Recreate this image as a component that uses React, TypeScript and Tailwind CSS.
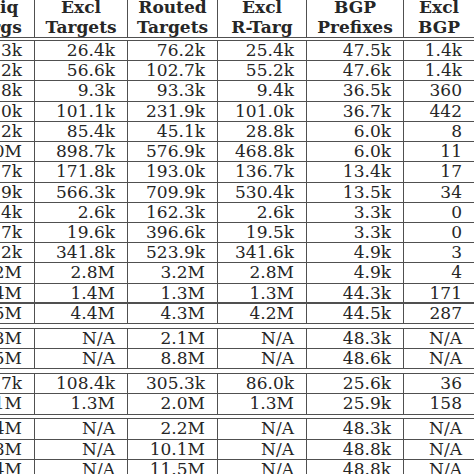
import React from 'react';

type Row = string[];

const header: [string, string][] = [
  ['Uniq', 'Targs'],
  ['Excl', 'Targets'],
  ['Routed', 'Targets'],
  ['Excl', 'R-Targ'],
  ['BGP', 'Prefixes'],
  ['Excl', 'BGP'],
];

const groups: Row[][] = [
  [
    ['31.3k', '26.4k', '76.2k', '25.4k', '47.5k', '1.4k'],
    ['62.2k', '56.6k', '102.7k', '55.2k', '47.6k', '1.4k'],
    ['10.8k', '9.3k', '93.3k', '9.4k', '36.5k', '360'],
    ['111.0k', '101.1k', '231.9k', '101.0k', '36.7k', '442'],
    ['93.2k', '85.4k', '45.1k', '28.8k', '6.0k', '8'],
    ['1.0M', '898.7k', '576.9k', '468.8k', '6.0k', '11'],
    ['208.7k', '171.8k', '193.0k', '136.7k', '13.4k', '17'],
    ['742.9k', '566.3k', '709.9k', '530.4k', '13.5k', '34'],
    ['5.4k', '2.6k', '162.3k', '2.6k', '3.3k', '0'],
    ['21.7k', '19.6k', '396.6k', '19.5k', '3.3k', '0'],
    ['382.2k', '341.8k', '523.9k', '341.6k', '4.9k', '3'],
    ['3.2M', '2.8M', '3.2M', '2.8M', '4.9k', '4'],
    ['1.4M', '1.4M', '1.3M', '1.3M', '44.3k', '171'],
    ['4.5M', '4.4M', '4.3M', '4.2M', '44.5k', '287'],
  ],
  [
    ['2.3M', 'N/A', '2.1M', 'N/A', '48.3k', 'N/A'],
    ['9.5M', 'N/A', '8.8M', 'N/A', '48.6k', 'N/A'],
  ],
  [
    ['314.7k', '108.4k', '305.3k', '86.0k', '25.6k', '36'],
    ['2.1M', '1.3M', '2.0M', '1.3M', '25.9k', '158'],
  ],
  [
    ['2.4M', 'N/A', '2.2M', 'N/A', '48.3k', 'N/A'],
    ['10.8M', 'N/A', '10.1M', 'N/A', '48.8k', 'N/A'],
    ['12.4M', 'N/A', '11.5M', 'N/A', '48.8k', 'N/A'],
  ],
];

const cols = 'grid grid-cols-[78px_93px_90px_89px_97px_71px]';

export default function App() {
  return (
    <div className="w-[474px] h-[474px] overflow-hidden bg-white text-[#262626] font-['DejaVu_Serif',serif] text-[17px]">
      <div className="w-[518px] ml-[-43px] mt-[-3px]">
        <div className={`${cols} border-b border-[#505050]`}>
          {header.map(([a, b], i) => (
            <div key={i} className="border-r border-[#505050] text-center font-bold leading-[20px]">
              <div>{a}</div>
              <div>{b}</div>
            </div>
          ))}
        </div>
        {groups.map((rows, g) => (
          <div key={g} className={`border-t border-[#505050] ${g === 0 ? 'mt-[2px]' : 'mt-[3.8px]'}`}>
            {rows.map((row, r) => {
              // the rule under this row prints heavier in the source
              const heavy = g === 0 && r === 12;
              return (
                <div
                  key={r}
                  className={`${cols} border-[#505050] ${heavy ? 'border-b-2' : 'border-b'}`}
                >
                  {row.map((cell, c) => (
                    <div
                      key={c}
                      className={`border-r border-[#505050] text-right pr-3 whitespace-nowrap ${
                        heavy ? 'h-[18.23px] leading-[18.23px]' : 'h-[19.23px] leading-[19.23px]'
                      }`}
                    >
                      {cell}
                    </div>
                  ))}
                </div>
              );
            })}
          </div>
        ))}
      </div>
    </div>
  );
}
